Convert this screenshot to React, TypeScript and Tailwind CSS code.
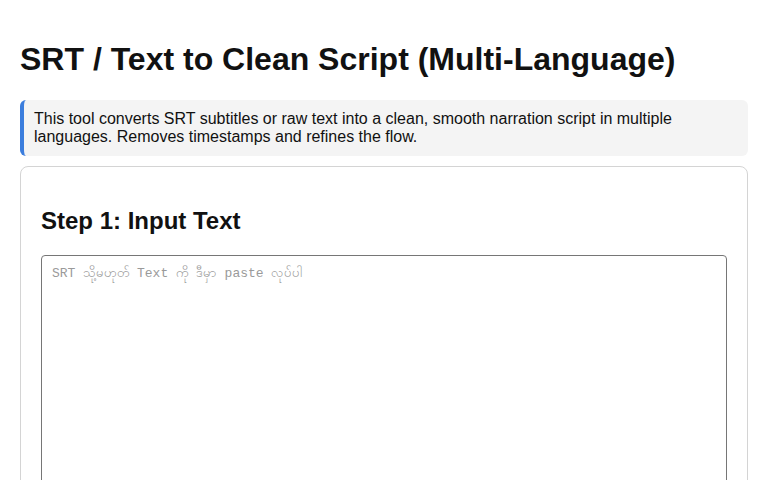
import { useState } from "react";

export default function App() {
  const [text, setText] = useState("");

  return (
    <div className="min-h-screen bg-white p-5 text-[#111] font-['Liberation_Sans',Arial,sans-serif]">
      {/* Title */}
      <h1 className="my-[21.44px] text-[32px] font-bold leading-[1.15]">
        SRT / Text to Clean Script (Multi-Language)
      </h1>

      {/* Intro note */}
      <div className="rounded-md border-l-4 border-[#3b7ddd] bg-[#f4f4f4] p-2.5 text-base leading-[1.15]">
        This tool converts SRT subtitles or raw text into a clean, smooth narration script in multiple
        languages. Removes timestamps and refines the flow.
      </div>

      {/* Step 1 card */}
      <div className="mt-2.5 rounded-lg border border-[#d4d4d4] p-5">
        <h2 className="my-[19.92px] text-2xl font-bold leading-[1.15]">Step 1: Input Text</h2>
        <textarea
          value={text}
          onChange={(e) => setText(e.target.value)}
          placeholder="SRT သို့မဟုတ် Text ကို ဒီမှာ paste လုပ်ပါ"
          className="block h-[320px] w-full resize-y rounded-sm border border-[#767676] p-2.5 font-['Liberation_Mono','Courier_New',monospace] text-[13px] leading-[15px] placeholder:text-[#9a9a9a] focus:outline-none"
        />
      </div>
    </div>
  );
}
